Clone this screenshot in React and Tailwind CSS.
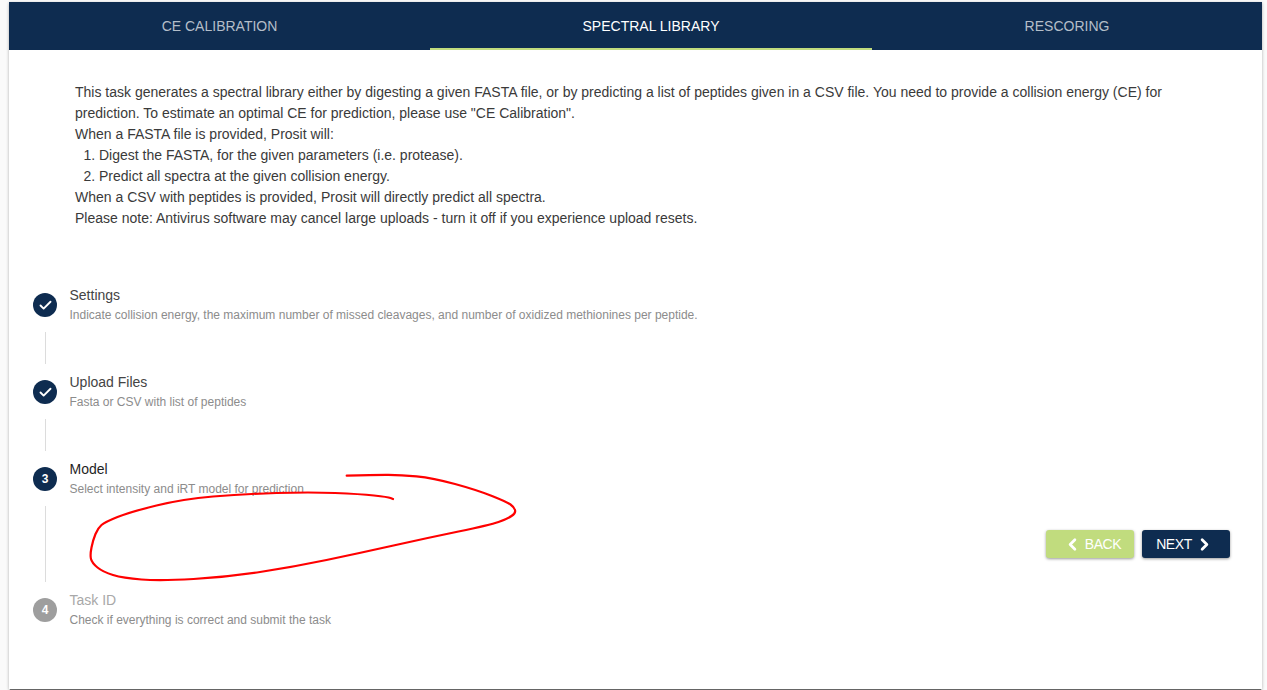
import React from "react";
import { Check, ChevronLeft, ChevronRight } from "lucide-react";

const pts = [[346.7,475.7],[372,475],[400,474.7],[433,478],[477,490],[507,502],[514,507],[516,513],[507,519],[490,525],[427,538],[360,553],[293,567],[227,577],[160,581],[123,578],[103,572],[92,563],[90,555],[93,540],[98,528],[105,522],[130,512],[183,499],[243,494],[310,492],[360,494],[388,497],[393,499]];

function inkPath(p) {
  let d = `M${p[0][0]} ${p[0][1]}`;
  for (let i = 1; i < p.length - 1; i++) {
    const mx = (p[i][0] + p[i + 1][0]) / 2;
    const my = (p[i][1] + p[i + 1][1]) / 2;
    d += ` Q${p[i][0]} ${p[i][1]} ${mx} ${my}`;
  }
  const l = p[p.length - 1];
  return d + ` L${l[0]} ${l[1]}`;
}

function Badge({ state, n }) {
  const bg = state === "todo" ? "bg-[#9e9e9e]" : "bg-[#0e2c50]";
  return (
    <div className={`w-6 h-6 rounded-full ${bg} flex items-center justify-center text-white text-xs font-bold shrink-0`}>
      {state === "done" ? <Check size={15} strokeWidth={3} /> : n}
    </div>
  );
}

function Step({ state, n, title, caption }) {
  const titleColor = state === "todo" ? "text-[#a8a8a8]" : state === "active" ? "text-[#1f1f1f]" : "text-[#444444]";
  return (
    <div className="flex items-center h-[38px] pl-6">
      <Badge state={state} n={n} />
      <div className="pl-[12.5px] pb-[2px]">
        <div className={`text-sm leading-[18px] ${titleColor}`}>{title}</div>
        <div className="text-xs leading-[14px] mt-[4px] text-[#8c8c8c]">{caption}</div>
      </div>
    </div>
  );
}

function Connector({ h, mb, children }) {
  return (
    <div className="flex items-start">
      <div className={`ml-9 mt-2 w-px bg-[#dcdcdc] ${h} ${mb}`} />
      {children}
    </div>
  );
}

export default function App() {
  return (
    <div className="relative h-[690px] overflow-hidden bg-[#fafafa] pt-[2px] pl-[9px] pr-[5px] font-['Liberation_Sans',sans-serif]">
      <div className="bg-white h-[687px] shadow-[0_2px_1px_-1px_rgba(0,0,0,0.5),0_1px_3px_rgba(0,0,0,0.3)]">
        <div className="flex h-12 bg-[#0e2c50] text-sm">
          <div className="w-[421px] flex items-center justify-center text-[#b4bec9]">CE CALIBRATION</div>
          <div className="w-[442px] flex items-center justify-center text-white border-y-[2px] border-t-transparent border-b-[#c1dc7e]">SPECTRAL LIBRARY</div>
          <div className="flex-1 flex items-center justify-center text-[#b4bec9]">RESCORING</div>
        </div>

        <div className="pt-8 pl-[66px] pr-[92px] text-sm leading-[21px] text-[#3a3a3a]">
          <p>This task generates a spectral library either by digesting a given FASTA file, or by predicting a list of peptides given in a CSV file. You need to provide a collision energy (CE) for prediction. To estimate an optimal CE for prediction, please use "CE Calibration".</p>
          <p>When a FASTA file is provided, Prosit will:</p>
          <ol className="list-decimal pl-6">
            <li>Digest the FASTA, for the given parameters (i.e. protease).</li>
            <li>Predict all spectra at the given collision energy.</li>
          </ol>
          <p>When a CSV with peptides is provided, Prosit will directly predict all spectra.</p>
          <p>Please note: Antivirus software may cancel large uploads - turn it off if you experience upload resets.</p>
        </div>

        <div className="mt-[57px]">
          <Step state="done" n={1} title="Settings" caption="Indicate collision energy, the maximum number of missed cleavages, and number of oxidized methionines per peptide." />
          <Connector h="h-8" mb="mb-[9px]" />
          <Step state="done" n={2} title="Upload Files" caption="Fasta or CSV with list of peptides" />
          <Connector h="h-8" mb="mb-[9px]" />
          <Step state="active" n={3} title="Model" caption="Select intensity and iRT model for prediction" />
          <Connector h="h-[76px]" mb="mb-[9px]">
            <div className="ml-auto mt-8 mr-8 flex gap-2 text-sm tracking-[-0.4px]">
              <div className="w-[88px] h-7 pl-1 rounded-[3px] bg-[#c1dc7e] text-white flex items-center justify-center gap-[3px] shadow-[0_1px_3px_rgba(0,0,0,0.4)]">
                <ChevronLeft size={19} strokeWidth={3.5} />
                BACK
              </div>
              <div className="w-[88px] h-7 pr-[2px] rounded-[3px] bg-[#0e2c50] text-white flex items-center justify-center gap-[3px] shadow-[0_1px_3px_rgba(0,0,0,0.4)]">
                NEXT
                <ChevronRight size={19} strokeWidth={3.5} />
              </div>
            </div>
          </Connector>
          <Step state="todo" n={4} title="Task ID" caption="Check if everything is correct and submit the task" />
        </div>
      </div>

      <svg className="absolute inset-0 pointer-events-none" width="1267" height="690" fill="none">
        <path d={inkPath(pts)} stroke="#ff0000" strokeWidth="2.2" strokeLinecap="round" strokeLinejoin="round" />
      </svg>
    </div>
  );
}
